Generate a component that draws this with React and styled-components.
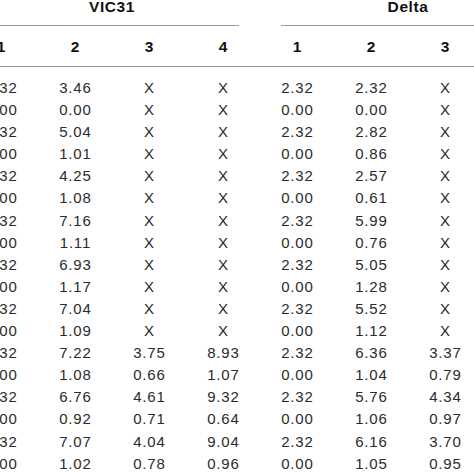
import React from "react";
import styled, { createGlobalStyle } from "styled-components";

const Global = createGlobalStyle`
  html, body { margin: 0; padding: 0; background: #ffffff; overflow: hidden; }
  body { font-family: "Liberation Sans", Arial, sans-serif; }
`;

const Frame = styled.div`
  width: 474px;
  height: 474px;
  overflow: hidden;
  background: #fff;
`;

const Table = styled.table`
  margin-left: -36px;
  width: 592px;
  table-layout: fixed;
  border-collapse: collapse;
  border-spacing: 0;
  font-family: "Liberation Sans", Arial, sans-serif;
`;

const GroupCell = styled.th`
  padding: 0;
  font-weight: 700;
  font-size: 15.5px;
  letter-spacing: 0.6px;
  color: #111;
  text-align: center;
`;

const GroupLabel = styled.div`
  height: 25px;
  line-height: 13px;
  margin: 0 21px;
  border-bottom: 1px solid #9c9c9c;
`;

const HeadCell = styled.th`
  padding: 2px 0 0;
  line-height: 38px;
  font-weight: 700;
  font-size: 15.5px;
  color: #111;
  text-align: center;
  border-bottom: 1px solid #9c9c9c;
`;

const Cell = styled.td`
  padding: ${(p) => (p.$first ? "10px 0 0" : "0")};
  line-height: 22.1px;
  font-size: 15px;
  letter-spacing: 0.8px;
  text-indent: 0.8px;
  color: #2b2b2b;
  text-align: center;
  white-space: nowrap;
`;

const rows = [
  ["2.32", "3.46", "X", "X", "2.32", "2.32", "X", ""],
  ["0.00", "0.00", "X", "X", "0.00", "0.00", "X", ""],
  ["2.32", "5.04", "X", "X", "2.32", "2.82", "X", ""],
  ["0.00", "1.01", "X", "X", "0.00", "0.86", "X", ""],
  ["2.32", "4.25", "X", "X", "2.32", "2.57", "X", ""],
  ["0.00", "1.08", "X", "X", "0.00", "0.61", "X", ""],
  ["2.32", "7.16", "X", "X", "2.32", "5.99", "X", ""],
  ["0.00", "1.11", "X", "X", "0.00", "0.76", "X", ""],
  ["2.32", "6.93", "X", "X", "2.32", "5.05", "X", ""],
  ["0.00", "1.17", "X", "X", "0.00", "1.28", "X", ""],
  ["2.32", "7.04", "X", "X", "2.32", "5.52", "X", ""],
  ["0.00", "1.09", "X", "X", "0.00", "1.12", "X", ""],
  ["2.32", "7.22", "3.75", "8.93", "2.32", "6.36", "3.37", ""],
  ["0.00", "1.08", "0.66", "1.07", "0.00", "1.04", "0.79", ""],
  ["2.32", "6.76", "4.61", "9.32", "2.32", "5.76", "4.34", ""],
  ["0.00", "0.92", "0.71", "0.64", "0.00", "1.06", "0.97", ""],
  ["2.32", "7.07", "4.04", "9.04", "2.32", "6.16", "3.70", ""],
  ["0.00", "1.02", "0.78", "0.96", "0.00", "1.05", "0.95", ""],
];

const heads = ["1", "2", "3", "4", "1", "2", "3", "4"];

export default function App() {
  return (
    <Frame>
      <Global />
      <Table>
        <colgroup>
          {heads.map((_, i) => (
            <col key={i} style={{ width: 74 }} />
          ))}
        </colgroup>
        <thead>
          <tr>
            <GroupCell colSpan={4}>
              <GroupLabel>VIC31</GroupLabel>
            </GroupCell>
            <GroupCell colSpan={4}>
              <GroupLabel>Delta</GroupLabel>
            </GroupCell>
          </tr>
          <tr>
            {heads.map((h, i) => (
              <HeadCell key={i}>{h}</HeadCell>
            ))}
          </tr>
        </thead>
        <tbody>
          {rows.map((r, ri) => (
            <tr key={ri}>
              {r.map((v, ci) => (
                <Cell key={ci} $first={ri === 0}>
                  {v}
                </Cell>
              ))}
            </tr>
          ))}
        </tbody>
      </Table>
    </Frame>
  );
}
